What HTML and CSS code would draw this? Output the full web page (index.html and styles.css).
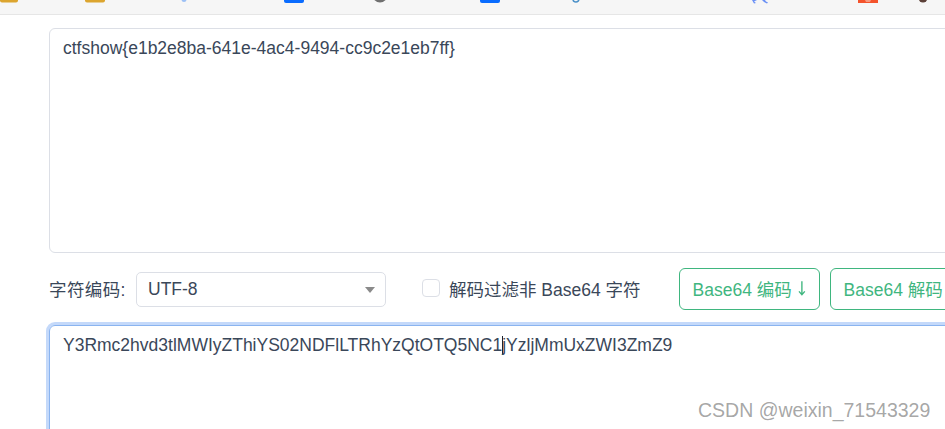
FILE: index.html
```html
<!DOCTYPE html>
<html lang="zh">
<head>
  <meta charset="UTF-8" />
  <meta name="viewport" content="width=device-width, initial-scale=1" />
  <title>Base64 编码</title>
  <link rel="stylesheet" href="styles.css">
</head>
<body>
  <div class="bookmarks">
    <svg class="bookmark-icons" width="945" height="14" viewBox="0 0 945 14">
      <path d="M0 0h18v0.5q0 2-2 2H2q-2 0-2-2z" fill="#dca52f"/>
      <path d="M85 0h20v0.5q0 2-2 2H87q-2 0-2-2z" fill="#dca52f"/>
      <circle cx="184" cy="-0.5" r="2.5" fill="#9cc0f5"/>
      <path d="M284 0h20v1q0 2-2 2h-16q-2 0-2-2z" fill="#0a6cff"/>
      <circle cx="380" cy="-5" r="7.5" fill="#707070"/>
      <path d="M480 0h20v1q0 2-2 2h-16q-2 0-2-2z" fill="#0a6cff"/>
      <circle cx="576" cy="-1" r="3" fill="none" stroke="#4a90c8" stroke-width="1.5"/>
      <path d="M752 0h5l-3 1.5 2 1.5-2 0.5zM762 0h3l1 1.5 2 1-1 1-3-1.5z" fill="#6a90f5"/>
      <rect x="858" y="0" width="20" height="3" fill="#f4532c"/>
      <path d="M865 0h6l-1 2h-4z" fill="#f79a80"/>
      <circle cx="923" cy="-2" r="4.5" fill="#5c4038"/>
    </svg>
  </div>

  <div class="converter">
    <div class="text-box">ctfshow{e1b2e8ba-641e-4ac4-9494-cc9c2e1eb7ff}</div>

    <div class="options">
      <span class="charset-label">字符编码:</span>
      <div class="select-box">
        <span>UTF-8</span>
        <i class="select-arrow"></i>
      </div>
      <label class="filter-option">
        <i class="checkbox"></i>
        <span>解码过滤非 Base64 字符</span>
      </label>
      <button type="button" class="action-button encode-button">
        Base64 编码
        <svg class="arrow-icon" width="8" height="16" viewBox="0 0 8 16"><path d="M4 1v14M1 11.5L4 15l3-3.5" fill="none" stroke="currentColor" stroke-width="1.4"/></svg>
      </button>
      <button type="button" class="action-button">
        Base64 解码
        <svg class="arrow-icon" width="8" height="16" viewBox="0 0 8 16"><path d="M4 15V1M1 4.5L4 1l3 3.5" fill="none" stroke="currentColor" stroke-width="1.4"/></svg>
      </button>
    </div>

    <div class="text-box result-box">Y3Rmc2hvd3tlMWIyZThiYS02NDFlLTRhYzQtOTQ5NC1<i class="caret"></i>jYzljMmUxZWI3ZmZ9</div>
  </div>

  <div class="watermark">CSDN @weixin_71543329</div>
</body>
</html>
```

FILE: styles.css
```css
html, body {
  margin: 0;
  height: 429px;
  overflow: hidden;
  background: #fff;
}
body {
  font-family: "Liberation Sans", "Noto Sans CJK SC", sans-serif;
  font-size: 17.5px;
  color: #3a4759;
  position: relative;
}
.bookmarks {
  height: 14px;
  background: #f6f6f6;
  border-bottom: 1px solid #e6e6e6;
}
.bookmark-icons {
  display: block;
}
.converter {
  box-sizing: border-box;
  height: 414px;
  padding: 13px 0 0 49px;
  overflow: hidden;
}
.text-box {
  box-sizing: border-box;
  width: 1100px;
  height: 225px;
  padding: 9px 13px;
  border: 1px solid #dcdfe6;
  border-radius: 6px;
  line-height: 20px;
}
.options {
  display: flex;
  align-items: center;
  width: 1100px;
  height: 42px;
  margin-top: 15px;
}
.charset-label {
  width: 87px;
  margin-top: -2px;
  letter-spacing: 0.4px;
  white-space: nowrap;
}
.select-box {
  box-sizing: border-box;
  width: 250px;
  height: 35px;
  margin-top: 1px;
  padding: 0 11px;
  display: flex;
  align-items: center;
  justify-content: space-between;
  border: 1px solid #dcdfe6;
  border-radius: 5px;
}
.select-arrow {
  width: 0;
  height: 0;
  border-left: 5px solid transparent;
  border-right: 5px solid transparent;
  border-top: 6px solid #8a8a8a;
  margin-right: -1px;
}
.filter-option {
  display: flex;
  align-items: center;
  gap: 9px;
  margin-left: 36px;
  margin-top: -2px;
  white-space: nowrap;
}
.checkbox {
  box-sizing: border-box;
  width: 18px;
  height: 18px;
  border: 1px solid #dcdfe6;
  border-radius: 4px;
}
.action-button {
  box-sizing: border-box;
  width: 141px;
  height: 42px;
  padding: 0 13px 2px;
  margin-left: 10px;
  display: flex;
  align-items: center;
  gap: 6px;
  background: #fff;
  border: 1px solid #3fb67f;
  border-radius: 6px;
  color: #3fb67f;
  font: inherit;
  white-space: nowrap;
}
.encode-button {
  margin-left: 38px;
}
.result-box {
  height: 170px;
  margin-top: 15px;
  padding-top: 9px;
  border: 1px solid #8ab4f0;
  box-shadow: 0 0 0 3px #c4d9fa;
}
.caret {
  display: inline-block;
  width: 1px;
  height: 19px;
  margin-right: -1px;
  background: #1c2430;
  vertical-align: -4px;
}
.watermark {
  position: absolute;
  top: 399px;
  left: 698px;
  font-size: 19.5px;
  color: rgba(110, 110, 110, 0.62);
  white-space: nowrap;
}
```
